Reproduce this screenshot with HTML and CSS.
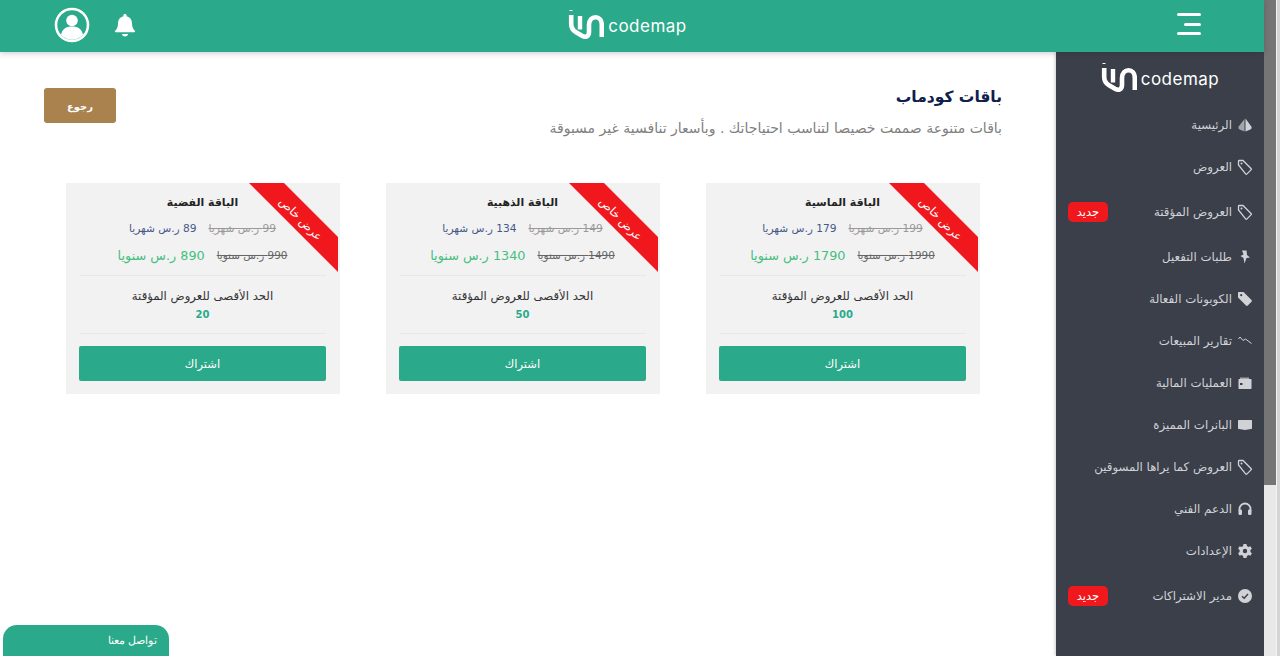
FILE: index.html
```html
<!DOCTYPE html>
<html lang="ar">
<head>
  <meta charset="UTF-8">
  <title>باقات كودماب</title>
  <link rel="stylesheet" href="styles.css">
</head>
<body>
  <svg class="defs" width="0" height="0">
    <symbol id="mark" viewBox="0 -6 36 31">
      <path d="M3.200 0V9C3.200 13 5 15.500 8 17.200L14 20.800C18 23 21 21 21 17V10C21 5 24 2.300 27.500 2.300C31 2.300 33.800 5 33.800 10V22" fill="none" stroke="currentColor" stroke-width="4.600"/>
      <path d="M12 1V14.500" fill="none" stroke="currentColor" stroke-width="4.400"/>
      <path d="M1.500-4.500h3" stroke="currentColor" stroke-width="1"/>
    </symbol>
    <symbol id="tag" viewBox="0 0 16 16">
      <path d="M1.500 6V2.200c0-.4.3-.7.7-.7H6l8 8c.4.4.4 1 0 1.400l-4 4c-.4.4-1 .4-1.400 0z" fill="none" stroke="currentColor" stroke-width="1.300"/>
      <circle cx="4.500" cy="4.500" r="1" fill="currentColor"/>
    </symbol>
  </svg>

  <div class="page">
    <header class="topbar">
      <div class="topbar-user">
        <svg class="avatar" viewBox="0 0 36 36">
          <circle cx="18" cy="18" r="16" fill="none" stroke="#fff" stroke-width="2.600"/>
          <circle cx="18" cy="13.500" r="5.800" fill="#fff"/>
          <path d="M7 28c1-6 5-8.500 11-8.500S28 22 29 28c-3 3-7 4.800-11 4.800S10 31 7 28z" fill="#fff"/>
        </svg>
        <svg class="bell" viewBox="0 0 22 24">
          <path d="M11 1c1 0 1.700.7 1.700 1.700v.6c3.400.8 5.300 3.500 5.300 7 0 4 1 5.600 3 7.700.4.500 0 1.200-.6 1.200H1.600c-.6 0-1-.7-.6-1.200 2-2.100 3-3.700 3-7.700 0-3.500 1.900-6.200 5.300-7v-.6C9.300 1.700 10 1 11 1z" fill="#fff"/>
          <path d="M8 21h6c0 1.500-1.300 2.500-3 2.500S8 22.500 8 21z" fill="#fff"/>
        </svg>
      </div>
      <div class="logo">
        <svg class="logo-mark"><use href="#mark"/></svg>
        <span>codemap</span>
      </div>
      <div class="burger"><i></i><i class="short"></i><i></i></div>
    </header>

    <div class="layout">
      <main class="content">
        <div class="head">
          <a class="back">رجوع</a>
          <div class="head-text">
            <h1>باقات كودماب</h1>
            <p>باقات متنوعة صممت خصيصا لتناسب احتياجاتك . وبأسعار تنافسية غير مسبوقة</p>
          </div>
        </div>

        <div class="plans">
          <section class="plan">
            <div class="ribbon"><span>عرض خاص</span></div>
            <h2>الباقة الفضية</h2>
            <div class="row-month"><s>99 ر.س شهريا</s><b>89 ر.س شهريا</b></div>
            <div class="row-year"><s>990 ر.س سنويا</s><b>890 ر.س سنويا</b></div>
            <div class="limit">
              <div>الحد الأقصى للعروض المؤقتة</div>
              <strong>20</strong>
            </div>
            <a class="subscribe">اشتراك</a>
          </section>
          <section class="plan">
            <div class="ribbon"><span>عرض خاص</span></div>
            <h2>الباقة الذهبية</h2>
            <div class="row-month"><s>149 ر.س شهريا</s><b>134 ر.س شهريا</b></div>
            <div class="row-year"><s>1490 ر.س سنويا</s><b>1340 ر.س سنويا</b></div>
            <div class="limit">
              <div>الحد الأقصى للعروض المؤقتة</div>
              <strong>50</strong>
            </div>
            <a class="subscribe">اشتراك</a>
          </section>
          <section class="plan">
            <div class="ribbon"><span>عرض خاص</span></div>
            <h2>الباقة الماسية</h2>
            <div class="row-month"><s>199 ر.س شهريا</s><b>179 ر.س شهريا</b></div>
            <div class="row-year"><s>1990 ر.س سنويا</s><b>1790 ر.س سنويا</b></div>
            <div class="limit">
              <div>الحد الأقصى للعروض المؤقتة</div>
              <strong>100</strong>
            </div>
            <a class="subscribe">اشتراك</a>
          </section>
        </div>
      </main>

      <aside class="sidebar">
        <div class="logo logo-side">
          <svg class="logo-mark"><use href="#mark"/></svg>
          <span>codemap</span>
        </div>
        <nav class="menu">
          <a class="item">
            <svg viewBox="0 0 16 16"><path d="M8.500 1.500l5.800 8c.7 1.200.2 2.500-1 3L8.500 14.500z" fill="currentColor"/><path d="M7.500 2L1.700 9.500c-.7 1.200-.2 2.500 1 3l4.800 2z" fill="currentColor" opacity=".7"/></svg>
            <span>الرئيسية</span>
          </a>
          <a class="item">
            <svg><use href="#tag"/></svg>
            <span>العروض</span>
          </a>
          <a class="item tall">
            <svg><use href="#tag"/></svg>
            <span>العروض المؤقتة</span>
            <em>جديد</em>
          </a>
          <a class="item">
            <svg viewBox="0 0 16 16"><path d="M5 1.500h4.500L10 6l3 2.500-3.500.5-2 5.500L6.500 9 3.500 7 6.500 5.500z" fill="currentColor"/></svg>
            <span>طلبات التفعيل</span>
          </a>
          <a class="item">
            <svg viewBox="0 0 16 16"><path d="M1 6.500V2c0-.6.4-1 1-1h4.500l8 8c.5.500.5 1.300 0 1.800l-3.700 3.700c-.5.500-1.300.5-1.800 0z" fill="currentColor"/><circle cx="4.200" cy="4.200" r="1.100" fill="#3a3f4a"/></svg>
            <span>الكوبونات الفعالة</span>
          </a>
          <a class="item">
            <svg viewBox="0 0 16 16"><path d="M1.500 6l1.500-2 3 3.500 2.500-1.500 6 4.500" fill="none" stroke="currentColor" stroke-width="1"/></svg>
            <span>تقارير المبيعات</span>
          </a>
          <a class="item">
            <svg viewBox="0 0 16 16"><path d="M3 2.500h9v2H3z" fill="currentColor" opacity=".7"/><path d="M1.500 5c0-.6.4-1 1-1h11c.6 0 1 .4 1 1v8c0 .6-.4 1-1 1h-11c-.6 0-1-.4-1-1z" fill="currentColor"/><rect x="3" y="8" width="2.500" height="2" fill="#3a3f4a"/></svg>
            <span>العمليات المالية</span>
          </a>
          <a class="item">
            <svg viewBox="0 0 16 16"><path d="M1 4c0-.6.4-1 1-1h12c.6 0 1 .4 1 1v7c0 .6-.4 1-1 1l-6 1-6-1c-.6 0-1-.4-1-1z" fill="currentColor"/></svg>
            <span>البانرات المميزة</span>
          </a>
          <a class="item">
            <svg><use href="#tag"/></svg>
            <span>العروض كما يراها المسوقين</span>
          </a>
          <a class="item">
            <svg viewBox="0 0 16 16"><path d="M2.500 10V8a5.500 5.500 0 0 1 11 0v2" fill="none" stroke="currentColor" stroke-width="1.800"/><rect x="1.500" y="8.500" width="3.500" height="5.500" rx="1.200" fill="currentColor"/><rect x="11" y="8.500" width="3.500" height="5.500" rx="1.200" fill="currentColor"/></svg>
            <span>الدعم الفني</span>
          </a>
          <a class="item">
            <svg viewBox="0 0 16 16"><path d="M6.500 1h3l.4 2 1.600.9 1.900-.7 1.500 2.600-1.500 1.300v1.800l1.500 1.300-1.500 2.600-1.900-.7-1.600.9-.4 2h-3l-.4-2-1.600-.9-1.900.7L1.100 10.200l1.500-1.300V7.100L1.100 5.800l1.500-2.600 1.900.7 1.600-.9z" fill="currentColor"/><circle cx="8" cy="8" r="2.200" fill="#3a3f4a"/></svg>
            <span>الإعدادات</span>
          </a>
          <a class="item tall">
            <svg viewBox="0 0 16 16"><circle cx="8" cy="8" r="7" fill="currentColor"/><path d="M5 8.200l2.200 2L11 6" fill="none" stroke="#3a3f4a" stroke-width="1.400"/></svg>
            <span>مدير الاشتراكات</span>
            <em>جديد</em>
          </a>
        </nav>
      </aside>
    </div>
  </div>

  <div class="scrollbar"><div class="thumb"></div><div class="track"></div></div>

  <a class="chat">تواصل معنا</a>
</body>
</html>
```

FILE: styles.css
```css
body {
  margin: 0;
  height: 656px;
  overflow: hidden;
  display: flex;
  background: #fff;
  font-family: "DejaVu Sans", sans-serif;
  color: #333;
}

.defs {
  position: absolute;
}

.page {
  flex: 1;
  display: flex;
  flex-direction: column;
  min-width: 0;
}

.scrollbar {
  width: 16px;
  display: flex;
  flex-direction: column;
  background: #d4d4d4;
}
.thumb, .track {
  width: 12px;
  border-right: 1px solid #f4f4f4;
}
.thumb {
  height: 485px;
  background: #757575;
}
.track {
  flex: 1;
  background: #e8e8e8;
}

/* top bar */
.topbar {
  height: 52px;
  flex: none;
  box-sizing: border-box;
  background: #2aaa8a;
  box-shadow: 0 1px 6px rgba(40, 30, 60, .25);
  display: grid;
  grid-template-columns: 1fr auto 1fr;
  align-items: center;
  padding: 0 63px 1px 54px;
  position: relative;
  z-index: 2;
}
.topbar-user {
  display: flex;
  align-items: center;
  gap: 24px;
  margin-top: -2px;
}
.avatar {
  width: 36px;
  height: 36px;
}
.bell {
  width: 22px;
  height: 24px;
}
.logo {
  display: flex;
  align-items: center;
  color: #fff;
  font-family: Inter, sans-serif;
  font-weight: 400;
  font-size: 17px;
  letter-spacing: .5px;
}
.logo-mark {
  width: 36px;
  height: 31px;
  margin: -3px 4px 0 0;
}
.burger {
  justify-self: end;
  width: 24px;
  margin-top: -3px;
  display: flex;
  flex-direction: column;
  align-items: flex-end;
  gap: 6.500px;
}
.burger i {
  display: block;
  width: 24px;
  height: 3px;
  border-radius: 2px;
  background: #fff;
}
.burger .short {
  width: 17px;
}

.layout {
  flex: 1;
  display: flex;
  min-height: 0;
}

/* main */
.content {
  flex: 1;
  padding: 36px 54px 0 44px;
}
.head {
  display: flex;
  justify-content: space-between;
  align-items: flex-start;
}
.back {
  width: 72px;
  height: 35px;
  box-sizing: border-box;
  padding-top: 2px;
  background: #a9824e;
  border-radius: 3px;
  color: #fff;
  font-size: 10px;
  font-weight: bold;
  display: flex;
  align-items: center;
  justify-content: center;
}
.head-text {
  direction: rtl;
}
h1 {
  margin: -1px 0 0;
  font-size: 15.500px;
  line-height: 20px;
  color: #10204c;
}
.head-text p {
  margin: 11px 0 0;
  font-size: 14px;
  line-height: 20px;
  color: #808080;
}

.plans {
  display: grid;
  grid-template-columns: repeat(3, 274px);
  gap: 46px;
  margin: 45px 22px 0;
}
.plan {
  position: relative;
  direction: rtl;
  height: 211px;
  box-sizing: border-box;
  padding: 0 14px 0 13px;
  background: #f2f2f2;
  text-align: center;
}
.plan h2 {
  margin: 0;
  padding-top: 12px;
  font-size: 10.900px;
  line-height: 15px;
  color: #222;
}
.ribbon {
  position: absolute;
  top: 0;
  right: 2px;
  width: 89px;
  height: 89px;
  background: #f0181c;
  clip-path: polygon(0 0, 35px 0, 89px 54px, 89px 89px);
}
.ribbon span {
  position: absolute;
  left: 17px;
  top: 29px;
  width: 70px;
  text-align: center;
  color: #fff;
  font-size: 11.500px;
  line-height: 14px;
  transform: rotate(45deg);
}
.row-month, .row-year {
  display: flex;
  justify-content: center;
  align-items: center;
}
.row-month {
  gap: 12px;
  margin-top: 8px;
  height: 20px;
  font-size: 10.600px;
}
.row-month s {
  color: #999;
}
.row-month b {
  color: #45588a;
  font-weight: normal;
}
.row-year {
  gap: 12px;
  margin-top: 6px;
  height: 22px;
  padding-bottom: 9px;
  border-bottom: 1px solid #e8e8e8;
  font-size: 10.400px;
}
.row-year s {
  color: #666;
}
.row-year b {
  color: #45bf7f;
  font-weight: normal;
  font-size: 12.800px;
}
.limit {
  height: 58px;
  box-sizing: border-box;
  padding-top: 12px;
  border-bottom: 1px solid #e8e8e8;
  font-size: 11.700px;
  line-height: 16px;
  color: #333;
}
.limit strong {
  display: block;
  margin-top: 3px;
  color: #2aaa8a;
  font-size: 10px;
}
.subscribe {
  margin-top: 12px;
  height: 35px;
  display: flex;
  align-items: center;
  justify-content: center;
  background: #2aaa8a;
  border-radius: 2px;
  color: #fff;
  font-size: 11.500px;
}

/* sidebar */
.sidebar {
  width: 208px;
  flex: none;
  background: #3a3f4a;
  box-shadow: -1px 0 3px rgba(0, 0, 0, .2);
}
.logo-side {
  justify-content: center;
  padding-top: 8px;
  height: 38px;
  margin-bottom: 6px;
}
.menu {
  direction: rtl;
}
.item {
  display: flex;
  align-items: center;
  height: 42px;
  padding: 0 11px 0 12px;
  color: #d0d2d6;
  font-size: 11.800px;
}
.item.tall {
  height: 48px;
}
.item svg {
  width: 16px;
  height: 16px;
  margin-left: 5px;
  flex: none;
}
.item em {
  margin-right: auto;
  width: 40px;
  height: 20px;
  border-radius: 5px;
  background: #f0181c;
  color: #fff;
  font-style: normal;
  font-size: 11.500px;
  display: flex;
  align-items: center;
  justify-content: center;
}

/* floating chat tab */
.chat {
  position: fixed;
  left: 3px;
  bottom: 0;
  width: 166px;
  height: 31px;
  box-sizing: border-box;
  padding: 7px 12px 0 0;
  direction: rtl;
  background: #2aaa8a;
  border-radius: 14px 14px 0 0;
  color: #fff;
  font-family: "Liberation Sans", sans-serif;
  font-size: 11px;
  line-height: 16px;
}
```
